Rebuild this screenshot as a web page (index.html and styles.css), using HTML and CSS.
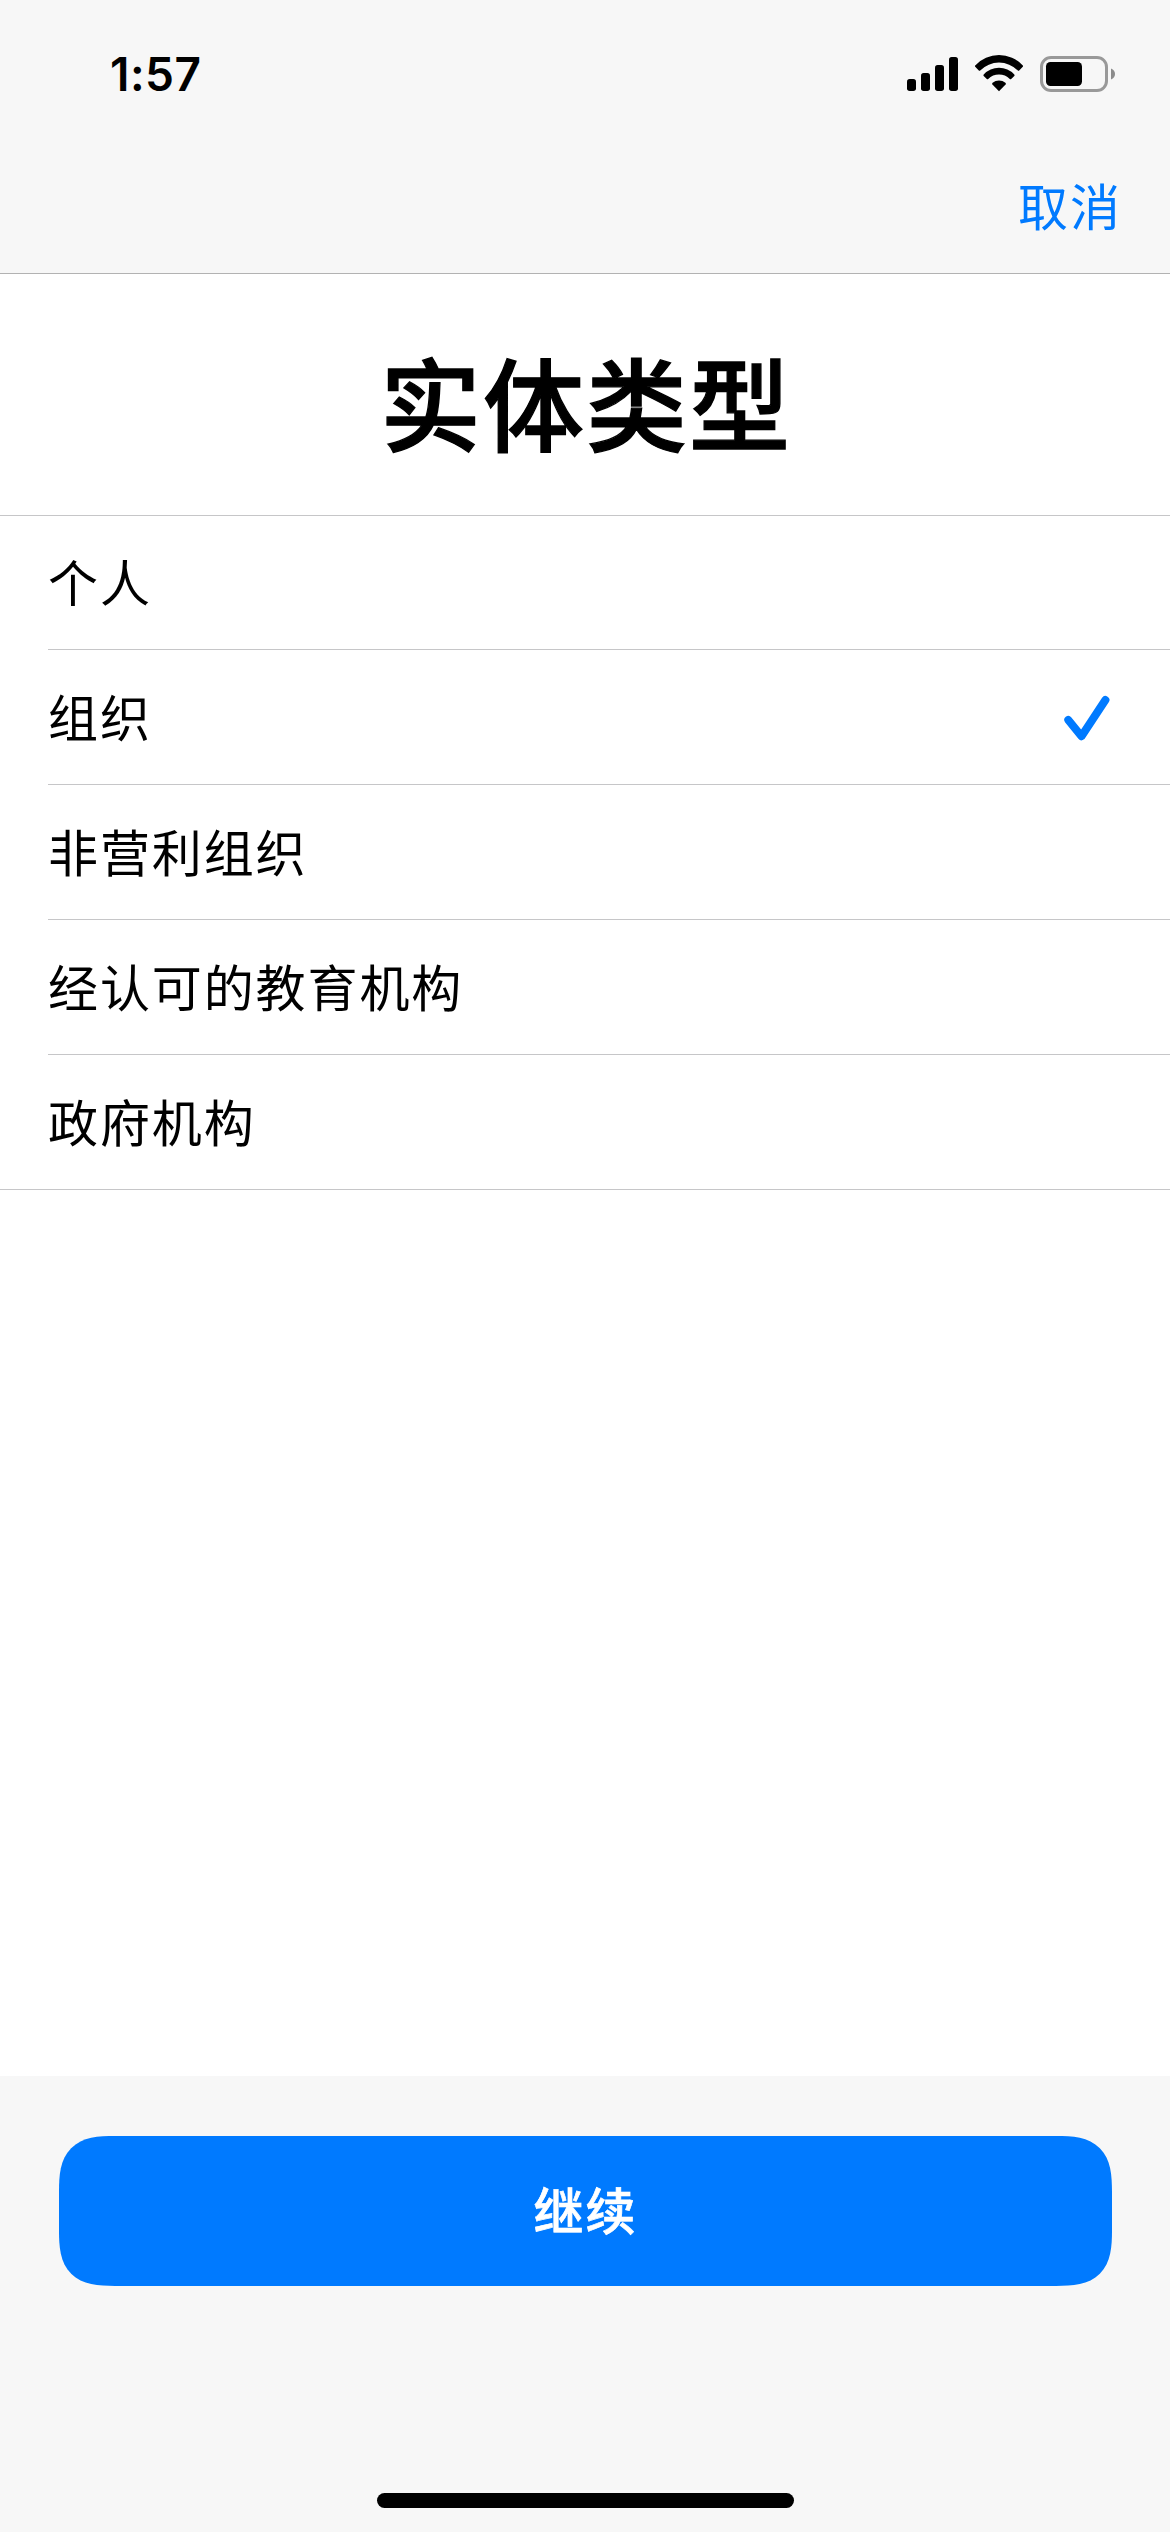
FILE: index.html
```html
<!DOCTYPE html>
<html lang="zh-CN">
<head>
<meta charset="utf-8">
<meta name="viewport" content="width=device-width">
<title>实体类型</title>
<link rel="stylesheet" href="styles.css">
</head>
<body>
<div class="screen">
  <header class="top">
    <div class="status">
      <span class="time">1:57</span>
      <svg class="indicators" width="209" height="38" viewBox="0 0 209 38">
        <g class="signal">
          <rect x="0" y="23" width="9" height="12" rx="2.7"/>
          <rect x="14" y="17" width="9" height="18" rx="2.7"/>
          <rect x="28" y="9" width="9" height="26" rx="2.7"/>
          <rect x="42" y="1" width="9" height="34" rx="2.7"/>
        </g>
        <path d="M92 35.2 L85.4 28.6 Q84.6 27.7 85.6 26.8 A10 10 0 0 1 98.4 26.8 Q99.4 27.7 98.6 28.6 Z"/>
        <path d="M76.7 18.5 A20.9 20.9 0 0 1 107.3 18.5 Q108 19.2 107.3 19.9 L104.2 23 Q103.5 23.7 102.8 23 A15.3 15.3 0 0 0 81.2 23 Q80.5 23.7 79.8 23 L76.7 19.9 Q76 19.2 76.7 18.5 Z"/>
        <path d="M68.2 9.4 A32.6 32.6 0 0 1 115.8 9.4 Q116.5 10.1 115.8 10.8 L112.2 14.4 Q111.5 15.1 110.8 14.4 A26.6 26.6 0 0 0 73.2 14.4 Q72.5 15.1 71.8 14.4 L68.2 10.8 Q67.5 10.1 68.2 9.4 Z"/>
        <rect class="battery-case" x="134.5" y="1.5" width="65" height="33" rx="9.5"/>
        <rect x="139" y="6" width="36" height="24" rx="4.5"/>
        <path class="battery-tip" d="M204 12.5 Q208 14.2 208 18 Q208 21.8 204 23.5 Z"/>
      </svg>
    </div>
    <nav class="nav"><a class="cancel">取消</a></nav>
  </header>
  <main class="content">
    <h1 class="title">实体类型</h1>
    <ul class="options">
      <li class="option"><span>个人</span></li>
      <li class="option">
        <span>组织</span>
        <svg class="check" width="46" height="50" viewBox="0 -4 46 50"><path d="M4.3 23.9 L17.5 40.2 L41.4 4"/></svg>
      </li>
      <li class="option"><span>非营利组织</span></li>
      <li class="option"><span>经认可的教育机构</span></li>
      <li class="option"><span>政府机构</span></li>
    </ul>
  </main>
  <footer class="bottom">
    <button class="continue">继续</button>
    <div class="home"></div>
  </footer>
</div>
</body>
</html>
```
FILE: styles.css
```css
* { box-sizing: border-box; }

body {
  margin: 0;
  background: #fff;
  color: #000;
  font-family: "Noto Sans CJK SC", sans-serif;
}

.screen {
  width: 1170px;
  height: 2532px;
  display: flex;
  flex-direction: column;
}

.top {
  height: 274px;
  background: #f7f7f7;
  border-bottom: 1px solid #b2b2b2;
}

.status {
  height: 141px;
  padding: 56px 54px 0 110px;
  display: flex;
  justify-content: space-between;
  align-items: flex-start;
}

.time {
  font: 600 46px/36px Inter, sans-serif;
  letter-spacing: 0.5px;
}

.indicators { overflow: visible; }
.battery-case { fill: none; stroke: #999; stroke-width: 3; }
.battery-tip { fill: #8c8c8c; }

.nav {
  height: 126px;
  padding-right: 48px;
  display: flex;
  justify-content: flex-end;
  align-items: center;
}

.cancel {
  color: #007aff;
  font-size: 50px;
  line-height: 60px;
  letter-spacing: 2px;
}

.content { flex: 1; }

.title {
  margin: 0;
  height: 242px;
  padding: 66px 0 0 2px;
  border-bottom: 1px solid #c6c6c8;
  font-size: 101px;
  font-weight: 500;
  -webkit-text-stroke: 1.3px #000;
  line-height: 120px;
  letter-spacing: 2px;
  text-align: center;
}

.options {
  margin: 0;
  padding: 0;
  list-style: none;
  border-bottom: 1px solid #c6c6c8;
}

.option {
  height: 135px;
  margin-left: 48px;
  padding: 0 60px 5px 0;
  display: flex;
  justify-content: space-between;
  align-items: center;
  border-bottom: 1px solid #c6c6c8;
  font-size: 50px;
  line-height: 60px;
  letter-spacing: 1.9px;
}

.option:first-child { height: 134px; }
.option:last-child { height: 134px; border-bottom: 0; }

.check { overflow: visible; margin-top: 4px; fill: none; stroke: #007aff; stroke-width: 8; stroke-linecap: round; stroke-linejoin: round; }

.bottom {
  height: 456px;
  padding: 60px 58px 24px 59px;
  background: #f7f7f7;
  display: flex;
  flex-direction: column;
  justify-content: space-between;
  align-items: center;
}

.continue {
  width: 1053px;
  height: 150px;
  padding: 0 0 6px;
  border: 0;
  border-radius: 44px;
  background: #007aff;
  color: #fff;
  font: 500 50px/60px "Noto Sans CJK SC", sans-serif;
  -webkit-text-stroke: 0.7px #fff;
  letter-spacing: 2px;
}

@supports (corner-shape: superellipse(1.5)) {
  .continue { border-radius: 56px; corner-shape: superellipse(1.5); }
}

.home {
  width: 417px;
  height: 15px;
  border-radius: 8px;
  background: #000;
}
```
